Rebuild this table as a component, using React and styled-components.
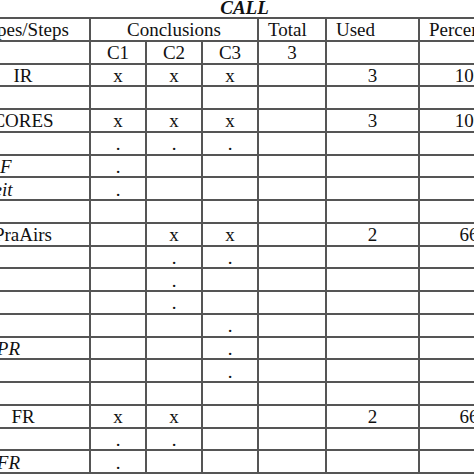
import React from 'react'
import styled, { createGlobalStyle } from 'styled-components'

const GlobalStyle = createGlobalStyle`
  html, body {
    margin: 0;
    padding: 0;
    background: #fff;
    overflow: hidden;
  }
  body {
    font-family: "Liberation Serif", "Times New Roman", serif;
    color: #111;
  }
`

const rows = [
  { label: 'IR', c: ['x', 'x', 'x'], used: '3', pct: '100%' },
  {},
  { label: 'CORES', c: ['x', 'x', 'x'], used: '3', pct: '100%' },
  { c: ['.', '.', '.'] },
  { label: 'NCAF', italic: true, c: ['.', '', ''] },
  { label: 'Deceit', italic: true, c: ['.', '', ''] },
  {},
  { label: 'PraAirs', c: ['', 'x', 'x'], used: '2', pct: '66%' },
  { c: ['', '.', '.'] },
  { c: ['', '.', ''] },
  { c: ['', '.', ''] },
  { c: ['', '', '.'] },
  { label: 'SCAPR', italic: true, c: ['', '', '.'] },
  { c: ['', '', '.'] },
  {},
  { label: 'FR', c: ['x', 'x', ''], used: '2', pct: '66%' },
  { c: ['.', '.', ''] },
  { label: 'SCAFR', italic: true, c: ['.', '', ''] },
]

const App = () => {
  return (
    <>
      <GlobalStyle />
      <Sheet>
        <Title>CALL</Title>
        <Table>
          <colgroup>
            <col style={{ width: 134 }} />
            <col style={{ width: 56 }} />
            <col style={{ width: 56 }} />
            <col style={{ width: 56 }} />
            <col style={{ width: 68 }} />
            <col style={{ width: 93 }} />
            <col style={{ width: 116 }} />
          </colgroup>
          <thead>
            <Row>
              <Cell>Types/Steps</Cell>
              <Cell colSpan={3}>Conclusions</Cell>
              <Cell left>Total</Cell>
              <Cell left>Used</Cell>
              <Cell left>Percentage</Cell>
            </Row>
            <Row>
              <Cell />
              <Cell>C1</Cell>
              <Cell>C2</Cell>
              <Cell>C3</Cell>
              <Cell>3</Cell>
              <Cell />
              <Cell />
            </Row>
          </thead>
          <tbody>
            {rows.map((row, i) => (
              <Row key={i}>
                <Cell left={row.italic} italic={row.italic}>{row.label}</Cell>
                {[0, 1, 2].map(j => (
                  <Cell key={j}>{row.c ? row.c[j] : ''}</Cell>
                ))}
                <Cell />
                <Cell>{row.used}</Cell>
                <Cell>{row.pct}</Cell>
              </Row>
            ))}
          </tbody>
        </Table>
      </Sheet>
    </>
  )
}

const Sheet = styled.div`
  width: 579px;
  margin-left: -45px;
`

const Title = styled.div`
  height: 17px;
  font-size: 19px;
  line-height: 16px;
  font-weight: bold;
  font-style: italic;
  text-align: center;
`

const Table = styled.table`
  width: 579px;
  table-layout: fixed;
  border-collapse: collapse;
  font-size: 19px;
`

const Row = styled.tr`
  height: 22.75px;
`

const Cell = styled.td`
  border: 2px solid #555;
  padding: 2px 0 0;
  padding-left: ${p => (p.left ? (p.italic ? '6px' : '9px') : '0')};
  text-align: ${p => (p.left ? 'left' : 'center')};
  font-style: ${p => (p.italic ? 'italic' : 'normal')};
  line-height: 18px;
  white-space: nowrap;
  overflow: hidden;
  vertical-align: middle;
`

export default App
